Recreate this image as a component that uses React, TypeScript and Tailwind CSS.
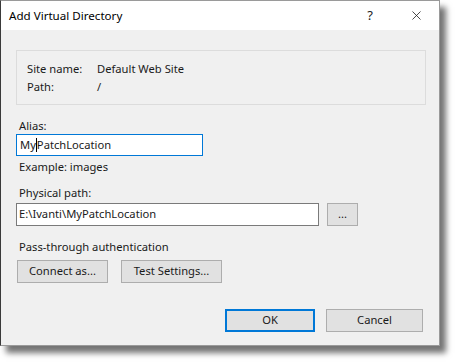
import { X } from "lucide-react";

const font = { fontFamily: '"Noto Sans", "Open Sans", sans-serif' };

function WinButton({
  label,
  className = "",
  focused = false,
}: {
  label: string;
  className?: string;
  focused?: boolean;
}) {
  return (
    <button
      className={`h-[23px] bg-[#e1e1e1] text-[11.2px] text-[#1a1a1a] flex items-center justify-center ${
        focused ? "border-2 border-[#0078d7]" : "border border-[#adadad]"
      } ${className}`}
    >
      {label}
    </button>
  );
}

export default function App() {
  return (
    <div className="w-[455px] h-[363px] bg-white overflow-hidden" style={font}>
      <div className="w-[440px] h-[346px] bg-[#f0f0f0] border border-[#9a9a9a] border-l-[#3a3a3a] flex flex-col shadow-[6px_7px_6px_rgba(0,0,0,0.55)] text-[11.2px] text-[#1a1a1a]">
        {/* Title bar */}
        <div className="h-[29px] bg-white flex items-center pl-[8px] shrink-0">
          <span className="text-[11.6px] text-black">Add Virtual Directory</span>
          <span className="ml-auto text-[13px] text-[#222] mr-[36px]">?</span>
          <X className="w-[15px] h-[15px] mr-[15px] text-[#222]" strokeWidth={1.3} />
        </div>

        <div className="flex flex-col px-[15px]">
          {/* Site info group */}
          <div className="mt-[20px] w-[410px] h-[55px] border border-[#dcdcdc] pt-[9px] pl-[10px] leading-[18px]">
            <div className="flex">
              <span className="w-[70px]">Site name:</span>
              <span>Default Web Site</span>
            </div>
            <div className="flex">
              <span className="w-[70px]">Path:</span>
              <span>/</span>
            </div>
          </div>

          <div className="mt-[13px] pl-[3px] leading-[16px]">Alias:</div>
          <div className="w-[187px] h-[22px] bg-white border border-[#0078d7] flex items-center pl-[3px]">
            <span>My</span>
            <span className="w-px h-[14px] bg-black"></span>
            <span>PatchLocation</span>
          </div>

          <div className="mt-[3px] pl-[3px] leading-[16px]">Example: images</div>

          <div className="mt-[10px] pl-[3px] leading-[16px]">Physical path:</div>
          <div className="mt-[2px] flex">
            <div className="w-[303px] h-[23px] bg-white border border-[#7a7a7a] flex items-center pl-[2px]">
              E:\Ivanti\MyPatchLocation
            </div>
            <WinButton label="..." className="ml-[8px] w-[31px]" />
          </div>

          <div className="mt-[13px] pl-[3px] leading-[16px]">Pass-through authentication</div>
          <div className="mt-[5px] flex pl-[1px] gap-[13px]">
            <WinButton label="Connect as..." className="w-[91px]" />
            <WinButton label="Test Settings..." className="w-[101px]" />
          </div>

          <div className="mt-[26px] flex justify-end pr-[1px] gap-[11px]">
            <WinButton label="OK" focused className="w-[90px]" />
            <WinButton label="Cancel" className="w-[97px]" />
          </div>
        </div>
      </div>
    </div>
  );
}
